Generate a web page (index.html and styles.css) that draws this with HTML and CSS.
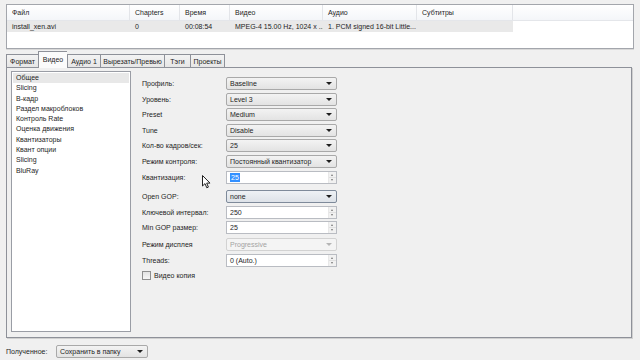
FILE: index.html
```html
<!DOCTYPE html>
<html>
<head>
<meta charset="utf-8">
<link rel="stylesheet" href="styles.css">
</head>
<body>
<div class="app">
  <div class="files">
    <div class="frow head">
      <div class="c c1">Файл</div>
      <div class="c c2">Chapters</div>
      <div class="c c3">Время</div>
      <div class="c c4">Видео</div>
      <div class="c c5">Аудио</div>
      <div class="c c6">Субтитры</div>
      <div class="c c7"></div>
    </div>
    <div class="frow item">
      <div class="c c1">install_xen.avi</div>
      <div class="c c2">0</div>
      <div class="c c3">00:08:54</div>
      <div class="c c4">MPEG-4 15.00 Hz, 1024 x ...</div>
      <div class="c c5">1. PCM signed 16-bit Little...</div>
      <div class="c c6"></div>
      <div class="c c7 blank"></div>
    </div>
  </div>

  <div class="tabs">
    <div class="tab t1">Формат</div>
    <div class="tab t2 active">Видео</div>
    <div class="tab t3">Аудио 1</div>
    <div class="tab t4">Вырезать/Превью</div>
    <div class="tab t5">Тэги</div>
    <div class="tab t6">Проекты</div>
  </div>

  <div class="pane">
    <ul class="list">
      <li class="sel">Общее</li>
      <li>Slicing</li>
      <li>B-кадр</li>
      <li>Раздел макроблоков</li>
      <li>Контроль Rate</li>
      <li>Оценка движения</li>
      <li>Квантизаторы</li>
      <li>Квант опции</li>
      <li>Slicing</li>
      <li>BluRay</li>
    </ul>

    <div class="form">
      <div class="row"><span class="lbl">Профиль:</span><div class="combo">Baseline</div></div>
      <div class="row"><span class="lbl">Уровень:</span><div class="combo">Level 3</div></div>
      <div class="row"><span class="lbl">Preset</span><div class="combo">Medium</div></div>
      <div class="row"><span class="lbl">Tune</span><div class="combo">Disable</div></div>
      <div class="row"><span class="lbl">Кол-во кадров/сек:</span><div class="combo">25</div></div>
      <div class="row"><span class="lbl">Режим контроля:</span><div class="combo">Постоянный квантизатор</div></div>
      <div class="row"><span class="lbl">Квантизация:</span><div class="spin"><span class="val"><span class="hl">25</span></span><span class="arrows"><i class="up"></i><i class="dn"></i></span></div></div>
      <div class="row gap4"><span class="lbl">Open GOP:</span><div class="combo hover">none</div></div>
      <div class="row"><span class="lbl">Ключевой интервал:</span><div class="spin"><span class="val">250</span><span class="arrows"><i class="up"></i><i class="dn"></i></span></div></div>
      <div class="row"><span class="lbl">Min GOP размер:</span><div class="spin"><span class="val">25</span><span class="arrows"><i class="up"></i><i class="dn"></i></span></div></div>
      <div class="row gap1"><span class="lbl">Режим дисплея</span><div class="combo disabled">Progressive</div></div>
      <div class="row gap1"><span class="lbl">Threads:</span><div class="spin"><span class="val">0 (Auto.)</span><span class="arrows"><i class="up"></i><i class="dn"></i></span></div></div>
      <div class="row check"><span class="box"></span><span>Видео копия</span></div>
    </div>
  </div>

  <div class="footer">
    <span class="flbl">Полученное:</span>
    <div class="combo small">Сохранить в папку</div>
  </div>

  <svg class="cursor" width="9" height="14" viewBox="0 0 9 14"><path d="M0.5 0.5 L0.5 11 L3 8.6 L4.8 12.8 L6.4 12.1 L4.7 8.1 L8 8.1 Z" fill="#fff" stroke="#222" stroke-width="1"/></svg>
</div>
</body>
</html>
```

FILE: styles.css
```css
* { box-sizing: border-box; margin: 0; padding: 0; }
html, body { width: 640px; height: 360px; overflow: hidden; }
body {
  background: #f0f0f0;
  font-family: "Liberation Sans", Arial, sans-serif;
  font-size: 7px;
  color: #1e1e1e;
}
.app { position: relative; padding: 4px 6px 0 6px; }

/* file table */
.files {
  height: 45px;
  border: 1px solid #a3a6ac;
  background: #fff;
  box-shadow: 0 1px 0 #d8d8d8;
}
.frow { display: flex; }
.frow.head {
  height: 16px;
  background: linear-gradient(#ffffff, #f4f6f9);
  border-bottom: 1px solid #e4e6ea;
}
.frow.item { height: 11px; }
.c {
  padding-left: 5px;
  white-space: nowrap;
  overflow: hidden;
  display: flex;
  align-items: center;
}
.head .c { border-right: 1px solid #e3e5e9; }
.head .c7 { border-right: none; }
.item .c { background: #e9e9e9; }
.item .c.blank { background: #fff; }
.c1 { width: 123px; }
.c2 { width: 50px; }
.c3 { width: 50px; }
.c4 { width: 93px; }
.c5 { width: 94px; }
.c6 { width: 96px; }
.c7 { flex: 1; }

/* tabs */
.tabs {
  position: relative;
  z-index: 1;
  display: flex;
  align-items: flex-end;
  height: 17px;
  margin-top: 1px;
}
.tab {
  height: 13px;
  border: 1px solid #8e9199;
  border-bottom: none;
  border-right: none;
  background: linear-gradient(#f3f3f3, #e6e6e6);
  display: flex;
  align-items: center;
  justify-content: center;
  white-space: nowrap;
}
.tab.t6 { border-right: 1px solid #8e9199; }
.tab.active {
  height: 17px;
  margin-bottom: -1px;
  background: #fbfbfb;
  padding-bottom: 2px;
}
.t1 { width: 32px; }
.t2 { width: 29px; }
.t3 { width: 33px; }
.t4 { width: 64px; }
.t5 { width: 26px; }
.t6 { width: 35px; }

/* pane */
.pane {
  width: 626px;
  height: 271px;
  border: 1px solid #8e9199;
  background: #f0f0f0;
  padding: 3px 4px;
  display: flex;
  align-items: flex-start;
  box-shadow: 1px 1px 0 #d0d0d0;
}
.list {
  list-style: none;
  width: 120px;
  height: 261px;
  background: #fff;
  border: 1px solid #9a9da5;
  padding: 1px 1px;
}
.list li {
  height: 10.3px;
  line-height: 10.3px;
  padding-left: 3px;
  white-space: nowrap;
}
.list li.sel { background: #e8e8e8; }

/* form */
.form {
  margin-left: 11px;
  margin-top: 6px;
  display: flex;
  flex-direction: column;
}
.row {
  display: flex;
  align-items: center;
  height: 13px;
  margin-bottom: 2.6px;
}
.row.gap4 { margin-top: 3.8px; }
.row.gap1 { margin-top: 1px; }
.lbl { width: 84px; white-space: nowrap; }

.combo {
  position: relative;
  width: 111px;
  height: 13px;
  border: 1px solid #a9a9a9;
  border-radius: 2px;
  background: linear-gradient(#f3f3f3, #e3e3e3);
  padding-left: 3px;
  display: flex;
  align-items: center;
  white-space: nowrap;
}
.combo::after {
  content: "";
  position: absolute;
  right: 4px;
  top: 4px;
  border-left: 3px solid transparent;
  border-right: 3px solid transparent;
  border-top: 3px solid #1e1e1e;
}
.combo.hover { border-color: #7e8a9a; background: linear-gradient(#eef1f5, #dde2e8); }
.combo.disabled {
  color: #a3a3a3;
  border-color: #d2d2d2;
  background: #f4f4f4;
}
.combo.disabled::after { border-top-color: #b5b5b5; }
.combo.small { width: 92px; }

.spin {
  width: 111px;
  height: 13px;
  border: 1px solid #b9bcc2;
  background: #fff;
  display: flex;
  align-items: stretch;
}
.spin .val {
  flex: 1;
  padding-left: 3px;
  display: flex;
  align-items: center;
}
.hl { background: #3390ff; color: #fff; padding: 0 1px; line-height: 9px; }
.arrows {
  width: 8px;
  display: flex;
  flex-direction: column;
  border-left: 1px solid #e8e8e8;
}
.arrows i {
  flex: 1;
  position: relative;
  background: #f1f1f1;
}
.arrows i.up { border-bottom: 1px solid #e0e0e0; }
.arrows i::after {
  content: "";
  position: absolute;
  left: 2px;
  top: 2px;
  border-left: 1.5px solid transparent;
  border-right: 1.5px solid transparent;
}
.arrows i.up::after { border-bottom: 2px solid #777; }
.arrows i.dn::after { border-top: 2px solid #777; top: 1px; }

.row.check { margin-top: 0; height: 11px; }
.box {
  width: 9px;
  height: 9px;
  border: 1px solid #8f8f8f;
  background: linear-gradient(#e3e3e3, #f6f6f6);
  margin-right: 3px;
}

/* footer */
.footer {
  margin-top: 7px;
  display: flex;
  align-items: center;
  height: 13px;
}
.flbl { width: 50px; }

.cursor {
  position: absolute;
  left: 202px;
  top: 175px;
}
```
